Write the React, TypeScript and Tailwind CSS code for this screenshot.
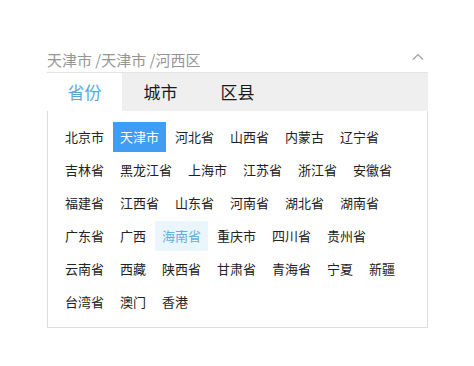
const provinces = [
  '北京市', '天津市', '河北省', '山西省', '内蒙古', '辽宁省',
  '吉林省', '黑龙江省', '上海市', '江苏省', '浙江省', '安徽省',
  '福建省', '江西省', '山东省', '河南省', '湖北省', '湖南省',
  '广东省', '广西', '海南省', '重庆市', '四川省', '贵州省',
  '云南省', '西藏', '陕西省', '甘肃省', '青海省', '宁夏', '新疆',
  '台湾省', '澳门', '香港',
];

// rows are fixed in the picture, so break them explicitly
const rows = [
  provinces.slice(0, 6),
  provinces.slice(6, 12),
  provinces.slice(12, 18),
  provinces.slice(18, 24),
  provinces.slice(24, 31),
  provinces.slice(31),
];

export default function App() {
  const selected = '天津市';
  const hovered = '海南省';

  return (
    <div
      className="min-h-[366px] w-[474px] bg-white pl-[47px] pt-[47px]"
      style={{ fontFamily: '"Noto Sans CJK SC", "Microsoft YaHei", sans-serif' }}
    >
      <div className="w-[381px]">
        <header className="flex h-[26px] items-center justify-between border-b border-[#e4e4e4] pr-[4px]">
          <span className="text-[15px] leading-[26px] text-[#959595]">天津市 /天津市 /河西区</span>
          <svg width="12" height="8" viewBox="0 0 12 8" className="mb-[5px]">
            <polyline points="1,6.5 6,1.5 11,6.5" fill="none" stroke="#a0a0a0" strokeWidth="1.2" />
          </svg>
        </header>

        <nav className="flex h-[38px] bg-[#efefef] text-[17px]">
          <button className="w-[75px] bg-white text-[#5aa8d8]">省份</button>
          <button className="w-[77px] text-[#1a1a1a]">城市</button>
          <button className="w-[77px] text-[#1a1a1a]">区县</button>
        </nav>

        <main className="flex flex-col gap-y-[3px] border border-t-0 border-[#dedede] px-[10px] pb-[10px] pt-[11px] text-[13px] text-[#222]">
          {rows.map((row, i) => (
            <div key={i} className="flex gap-x-[2px]">
              {row.map((name) => (
                <span
                  key={name}
                  className={
                    name === selected
                      ? 'flex h-[30px] items-center bg-[#3f9ef3] px-[7px] text-white'
                      : name === hovered
                        ? 'flex h-[30px] items-center bg-[#eaf5fc] px-[7px] text-[#62b0e0]'
                        : 'flex h-[30px] items-center px-[7px]'
                  }
                >
                  {name}
                </span>
              ))}
            </div>
          ))}
        </main>
      </div>
    </div>
  );
}
